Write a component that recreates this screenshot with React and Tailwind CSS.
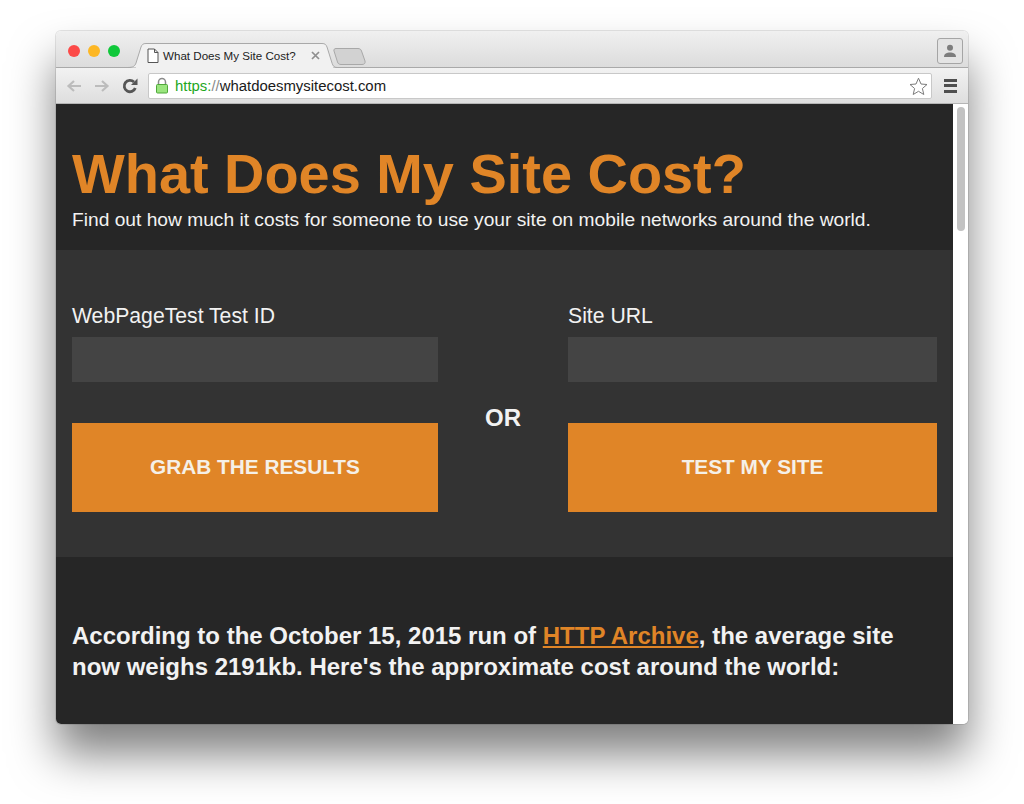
import React from 'react';

const sans = "font-['Liberation_Sans',Arial,sans-serif]";

const Lights = () => (
    <div className="flex gap-2 pl-3 pt-[14px] w-[72px] shrink-0">
        <span className="w-3 h-3 rounded-full bg-[#fc4a48] shrink-0"></span>
        <span className="w-3 h-3 rounded-full bg-[#fdb724] shrink-0"></span>
        <span className="w-3 h-3 rounded-full bg-[#10c83a] shrink-0"></span>
    </div>
);

const Tab = () => (
    <div className="relative w-[209px] h-[25px] mt-[12px] shrink-0">
        <svg className="absolute left-0 top-0" width="209" height="26" viewBox="0 0 209 26">
            <rect x="8" y="20" width="197" height="6" fill="#f1f1f1" />
            <path d="M0 24.500 C5 24.500 7 23 8 20 L13 4 C14 1.500 15 .5 18 .5 L194 .5 C197 .5 198 1.500 199 4 L204 20 C205 23 206 24.500 209 24.500" fill="#f1f1f1" stroke="#a9a9a9" />
        </svg>
        <svg className="absolute left-[18px] top-[5px]" width="14" height="16" viewBox="0 0 14 16">
            <path d="M2 1 H8.500 L12 4.500 V14.500 H2 Z M8.500 1 V4.500 H12" fill="#fff" stroke="#555" />
        </svg>
        <span className="absolute left-[35px] top-[5px] text-[11.6px] leading-[16px] text-[#222] whitespace-nowrap">What Does My Site Cost?</span>
        <svg className="absolute left-[183px] top-[8px]" width="9" height="9" viewBox="0 0 9 9">
            <path d="M1 1 L8 8 M8 1 L1 8" stroke="#8f8f8f" strokeWidth="1.700" />
        </svg>
    </div>
);

const NewTab = () => (
    <svg className="mt-[16px] -ml-[5px] shrink-0" width="36" height="20" viewBox="0 0 36 20">
        <path d="M4 1.500 H26 C28 1.500 29 2.500 29.500 4 L33 14 C33.500 16 32.500 17.500 30 17.500 H9 C7 17.500 6 16.500 5.500 15 L2 4 C1.500 2.500 2.500 1.500 4 1.500 Z" fill="#d2d2d2" stroke="#a8a8a8" />
    </svg>
);

const Profile = () => (
    <div className="ml-auto mr-[5px] mt-[7px] w-[26px] h-[26px] rounded-[3px] border border-[#a5a5a5] bg-[#e4e4e4] flex items-center justify-center">
        <svg width="14" height="14" viewBox="0 0 14 14">
            <circle cx="7" cy="3.800" r="3" fill="#7d7d7d" />
            <path d="M1 13 C1 9.500 4 8.500 7 8.500 C10 8.500 13 9.500 13 13 Z" fill="#7d7d7d" />
        </svg>
    </div>
);

const NavIcons = () => (
    <div className="flex items-center gap-[12px] pl-[10px] w-[92px] shrink-0">
        <svg width="16" height="14" viewBox="0 0 16 14">
            <path d="M15 7 H3 M8 2 L2.500 7 L8 12" fill="none" stroke="#bcbcbc" strokeWidth="2.200" />
        </svg>
        <svg width="16" height="14" viewBox="0 0 16 14">
            <path d="M1 7 H13 M8 2 L13.500 7 L8 12" fill="none" stroke="#bcbcbc" strokeWidth="2.200" />
        </svg>
        <svg width="16" height="16" viewBox="0 0 16 16">
            <path d="M13.300 10 A5.700 5.700 0 1 1 12 4" fill="none" stroke="#555" strokeWidth="2.800" />
            <path d="M9 7 L15.500 7 L15.500 .5 Z" fill="#555" />
        </svg>
    </div>
);

const AddressBar = () => (
    <div className="w-[784px] h-[26px] bg-white border border-[#c8c8c8] rounded-[2px] flex items-center shrink-0 relative">
        <svg className="ml-[6px]" width="14" height="17" viewBox="0 0 14 17">
            <path d="M3.500 8 V5 A3.500 3.500 0 0 1 10.500 5 V8" fill="none" stroke="#8b8b8b" strokeWidth="1.500" />
            <rect x="1.500" y="7.500" width="11" height="8.500" rx="1" fill="#9ae57e" stroke="#4fa83a" />
        </svg>
        <span className="ml-[6px] text-[14.900px] text-[#1a1a1a] whitespace-nowrap leading-[18px]">
            <span className="text-[#22a71d]">https:</span><span className="text-[#8a8a8a]">//</span>whatdoesmysitecost.com
        </span>
        <svg className="absolute right-[3px] top-[3px]" width="19" height="19" viewBox="0 0 19 19">
            <path d="M9.500 1.200 L12 7 L18 7.500 L13.400 11.500 L14.800 17.500 L9.500 14.300 L4.200 17.500 L5.600 11.500 L1 7.500 L7 7 Z" fill="#fff" stroke="#7b7b7b" strokeLinejoin="round" />
        </svg>
    </div>
);

const Menu = () => (
    <div className="ml-[12px] flex flex-col gap-[2.500px] w-[13px]">
        <span className="h-[3px] bg-[#4f4f4f]"></span>
        <span className="h-[3px] bg-[#4f4f4f]"></span>
        <span className="h-[3px] bg-[#4f4f4f]"></span>
    </div>
);

const Field = ({ label, button, width }) => (
    <div className={width}>
        <label className="block text-[21.200px] leading-[24px] text-[#f2f2f2]">{label}</label>
        <div className="mt-[9px] h-[45px] bg-[#444444]"></div>
        <button className="mt-[41px] w-full h-[89px] pb-[2px] bg-[#e08527] text-[#f5f0e8] text-[20.800px] font-bold flex items-center justify-center">
            {button}
        </button>
    </div>
);

const App = () => {
    return (
        <div className={`w-[1024px] h-[804px] bg-white overflow-hidden pt-[31px] pl-[56px] ${sans}`}>
            <div className="w-[912px] h-[693px] rounded-[5px] overflow-hidden flex flex-col shadow-[0_0_0_1px_rgba(0,0,0,0.1),0_30px_45px_rgba(0,0,0,0.5)]">
                <div className="h-[37px] flex bg-gradient-to-b from-[#f0f0f0] to-[#dcdcdc] border-b border-[#a9a9a9] shrink-0">
                    <Lights />
                    <Tab />
                    <NewTab />
                    <Profile />
                </div>
                <div className="h-[36px] flex items-center bg-gradient-to-b from-[#f2f2f2] to-[#dedede] border-b border-[#b5b5b5] shrink-0">
                    <NavIcons />
                    <AddressBar />
                    <Menu />
                </div>
                <div className="flex-1 flex min-h-0">
                    <main className="w-[897px] bg-[#262626] overflow-hidden">
                        <header className="h-[146px] px-4 pt-[37px]">
                            <h1 className="text-[55.900px] leading-[66px] font-bold text-[#e08527] whitespace-nowrap">What Does My Site Cost?</h1>
                            <p className="text-[19.200px] leading-[24px] text-[#f2f2f2] whitespace-nowrap mt-[1px]">Find out how much it costs for someone to use your site on mobile networks around the world.</p>
                        </header>
                        <section className="h-[307px] bg-[#333333] pl-4 pt-[54px] flex">
                            <Field label="WebPageTest Test ID" button="GRAB THE RESULTS" width="w-[366px]" />
                            <div className="w-[130px] pt-[98px] text-center text-[24px] leading-[32px] font-bold text-[#f2f2f2]">OR</div>
                            <Field label="Site URL" button="TEST MY SITE" width="w-[369px]" />
                        </section>
                        <p className="px-4 pt-[63px] text-[24px] leading-[31px] font-bold text-[#f2f2f2]">
                            According to the October 15, 2015 run of <a href="#" className="text-[#e08527] underline">HTTP Archive</a>, the average site<br />now weighs 2191kb. Here's the approximate cost around the world:
                        </p>
                    </main>
                    <aside className="w-[15px] bg-white pt-[3px] pl-[4px]">
                        <div className="w-[8px] h-[124px] rounded-full bg-[#c2c2c2]"></div>
                    </aside>
                </div>
            </div>
        </div>
    );
};

export default App;
